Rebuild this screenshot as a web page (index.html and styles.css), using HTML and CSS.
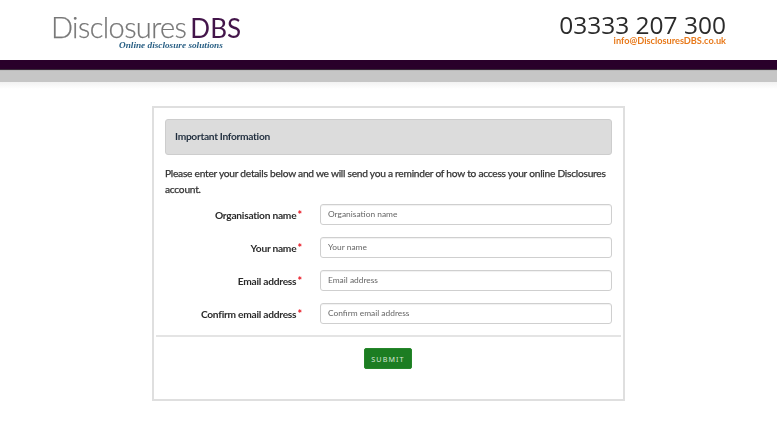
FILE: index.html
```html
<!DOCTYPE html>
<html lang="en">
<head>
<meta charset="utf-8">
<title>Disclosures DBS</title>
<link rel="stylesheet" href="styles.css">
</head>
<body>
<header class="header">
  <div class="logo">
    <div class="logo-main"><span class="logo-light">Disclosures</span><span class="logo-dbs">DBS</span></div>
    <div class="logo-tag">Online disclosure solutions</div>
  </div>
  <div class="contact">
    <div class="phone">03333 207 300</div>
    <div class="mail">info@DisclosuresDBS.co.uk</div>
  </div>
</header>
<div class="bar"></div>
<div class="band"></div>
<div class="fade"></div>
<main class="panel">
  <div class="heading">Important Information</div>
  <p class="intro">Please enter your details below and we will send you a reminder of how to access your online Disclosures account.</p>
  <form class="form">
    <div class="row"><label class="label">Organisation name <span class="req">*</span></label><input class="input" placeholder="Organisation name"></div>
    <div class="row"><label class="label">Your name <span class="req">*</span></label><input class="input" placeholder="Your name"></div>
    <div class="row"><label class="label">Email address <span class="req">*</span></label><input class="input" placeholder="Email address"></div>
    <div class="row"><label class="label">Confirm email address <span class="req">*</span></label><input class="input" placeholder="Confirm email address"></div>
    <div class="rule"></div>
    <div class="actions"><button class="submit" type="button">SUBMIT</button></div>
  </form>
</main>
</body>
</html>
```
FILE: styles.css
```css
* { box-sizing: border-box; }
html, body { margin: 0; padding: 0; background: #fff; }
body { height: 423px; overflow: hidden; font-family: "Lato", "Noto Sans", sans-serif; color: #222; }

.header { height: 60px; display: flex; justify-content: space-between; padding: 0 51px 0 51px; filter: blur(0.4px); }
.logo { display: flex; flex-direction: column; }
.logo-main { display: flex; align-items: baseline; height: 42px; padding-top: 10px; line-height: 34px; }
.logo-light { font-family: "Lato", sans-serif; font-weight: 300; font-size: 29px; letter-spacing: -0.6px; color: #777; -webkit-text-stroke: 0.25px #777; }
.logo-dbs { font-family: "Lato", sans-serif; font-weight: 400; font-size: 26px; letter-spacing: 0.1px; color: #43154a; margin-left: 4px; }
.logo-tag { font-family: "Liberation Serif", serif; font-weight: 700; font-style: italic; font-size: 9.25px; line-height: 10px; margin: -2px 0 0 68px; color: #2a6085; white-space: nowrap; }

.contact { display: flex; flex-direction: column; align-items: flex-end; }
.phone { font-family: "Open Sans", sans-serif; font-size: 24.5px; line-height: 28px; margin-top: 11px; color: #2b2b2b; }
.mail { font-size: 9.2px; line-height: 10px; margin-top: -3px; color: #e8791a; font-weight: 700; }

.bar { height: 10px; background: #29002a; border-bottom: 1px solid #3a2a3a; }
.band { height: 12px; background: #c6c6c6; border-top: 1px solid #bbb; }
.fade { height: 7px; background: linear-gradient(#f2f2f2, #fff); }

.panel { width: 473px; height: 295px; margin: 17px 0 0 152px; border: 2px solid #dfdfdf; padding: 11px 2px 0; filter: blur(0.35px); }
.heading { height: 36px; margin: 0 9px; background: #dcdcdc; border: 1px solid #cdcdcd; border-radius: 3px; padding-left: 9px; font-size: 10.2px; letter-spacing: -0.3px; font-weight: 700; line-height: 33px; color: #1f2d3d; }
.intro { margin: 11px 9px 0; font-size: 10.2px; letter-spacing: -0.25px; line-height: 15.5px; font-weight: 400; color: #333; -webkit-text-stroke: 0.25px #333; }

.form { margin-top: 7px; }
.row { display: flex; align-items: center; height: 21px; margin: 0 9px 12px; }
.label { width: 137px; text-align: right; font-size: 10.2px; letter-spacing: -0.25px; font-weight: 700; color: #2a2a2a; white-space: nowrap; }
.req { color: #e8101c; font-size: 11px; margin-left: -1px; }
.input { width: 292px; height: 21px; margin-left: 18px; border: 1px solid #cfcfcf; border-radius: 3px; padding: 0 7px; font-family: inherit; font-size: 8.4px; background: #fff; box-shadow: inset 0 1px 1px rgba(0,0,0,.06); outline: none; margin-top: -1px; }
.input::placeholder { color: #666; opacity: 1; }

.rule { height: 2px; background: #e4e4e4; margin: -1px 0 0; }
.actions { display: flex; justify-content: center; padding: 11px 1px 0 0; }
.submit { width: 48px; height: 21px; padding: 0; background: #1c7d22; border: 1px solid #25862a; border-radius: 2px; color: #d5e5d5; font-family: "Noto Sans", sans-serif; font-size: 7.2px; letter-spacing: 1.1px; }
```
